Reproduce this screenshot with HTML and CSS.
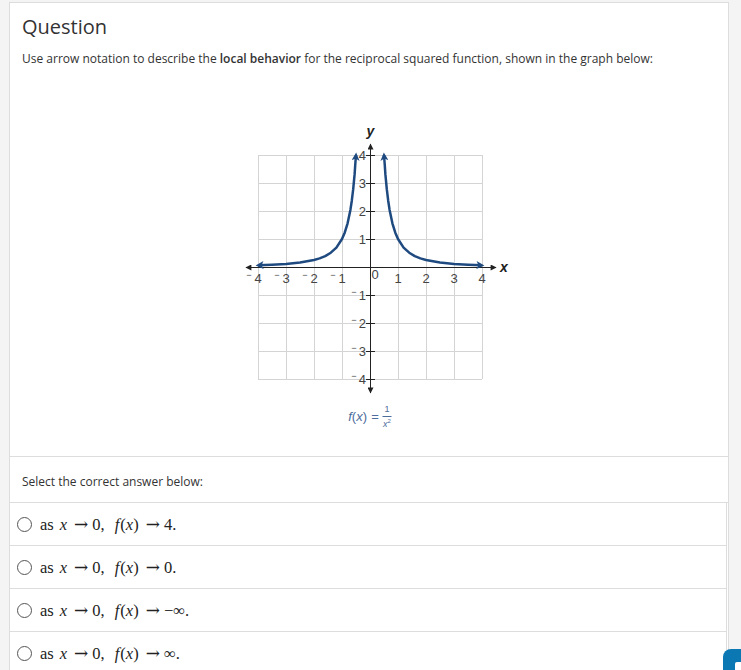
FILE: index.html
```html
<!doctype html>
<html lang="en">
<head>
	<meta charset="UTF-8">
	<title>Question</title>
	<link rel="stylesheet" href="styles.css">
</head>
<body>
	<div class="card">
		<div class="head">
			<h2>Question</h2>
			<p>Use arrow notation to describe the <b>local behavior</b> for the reciprocal squared function, shown in the graph below:</p>
		</div>
		<div class="figure">
			<svg width="300" height="320" viewBox="0 0 300 320">
				<defs>
					<marker id="curveHead" viewBox="0 0 10 10" refX="7" refY="5" markerWidth="10" markerHeight="8" markerUnits="userSpaceOnUse" orient="auto-start-reverse">
						<path d="M0,0 L10,5 L0,10 L2.5,5 z" fill="#1f4a80"/>
					</marker>
					<marker id="axisHead" viewBox="0 0 10 10" refX="9" refY="5" markerWidth="7" markerHeight="6" markerUnits="userSpaceOnUse" orient="auto-start-reverse">
						<path d="M0,0 L10,5 L0,10 z" fill="#222"/>
					</marker>
				</defs>
				<g class="grid">
					<path d="M38.5,35 V259 M66.5,35 V259 M94.5,35 V259 M122.5,35 V259 M178.5,35 V259 M206.5,35 V259 M234.5,35 V259 M262.5,35 V259"/>
					<path d="M38,35.5 H262 M38,63.5 H262 M38,91.5 H262 M38,119.5 H262 M38,175.5 H262 M38,203.5 H262 M38,231.5 H262 M38,259.5 H262"/>
				</g>
				<g class="axis">
					<path d="M26,147.5 H276" marker-start="url(#axisHead)" marker-end="url(#axisHead)"/>
					<path d="M150.5,24 V273" marker-start="url(#axisHead)" marker-end="url(#axisHead)"/>
					<path d="M146,35.5 H155 M146,63.5 H155 M146,91.5 H155 M146,119.5 H155 M146,175.5 H155 M146,203.5 H155 M146,231.5 H155 M146,259.5 H155"/>
				</g>
				<g class="curve">
					<path d="M164,35 L164.7,44 L165.4,54.4 L166.8,69.2 L168.2,80.7 L169.6,89.9 L172.4,103.3 L175.2,112.4 L178,119 L183.6,127.6 L189.2,132.7 L194.8,136.1 L200.4,138.4 L206,140 L220,142.5 L234,143.9 L248,144.7 L262,145.3" marker-start="url(#curveHead)" marker-end="url(#curveHead)"/>
					<path d="M136,35 L135.3,44 L134.6,54.4 L133.2,69.2 L131.8,80.7 L130.4,89.9 L127.6,103.3 L124.8,112.4 L122,119 L116.4,127.6 L110.8,132.7 L105.2,136.1 L99.6,138.4 L94,140 L80,142.5 L66,143.9 L52,144.7 L38,145.3" marker-start="url(#curveHead)" marker-end="url(#curveHead)"/>
				</g>
				<g class="ticks">
					<text x="38" y="163">4</text>
					<text x="66" y="163">3</text>
					<text x="94" y="163">2</text>
					<text x="122" y="163">1</text>
					<text x="178" y="163">1</text>
					<text x="206" y="163">2</text>
					<text x="234" y="163">3</text>
					<text x="262" y="163">4</text>
					<text x="155" y="159">0</text>
				</g>
				<g class="minus">
					<text x="29" y="158">−</text>
					<text x="57" y="158">−</text>
					<text x="85" y="158">−</text>
					<text x="113" y="158">−</text>
					<text x="134" y="175">−</text>
					<text x="134" y="203">−</text>
					<text x="134" y="231">−</text>
					<text x="134" y="259">−</text>
				</g>
				<g class="yticks">
					<text x="146" y="40">4</text>
					<text x="146" y="68">3</text>
					<text x="146" y="96">2</text>
					<text x="146" y="124">1</text>
					<text x="146" y="180">1</text>
					<text x="146" y="208">2</text>
					<text x="146" y="236">3</text>
					<text x="146" y="264">4</text>
				</g>
				<text class="axis-name" x="150.5" y="16">y</text>
				<text class="axis-name" x="284" y="152">x</text>
				<g class="formula">
					<text class="fx" x="147" y="301"><tspan font-style="italic">f</tspan>(<tspan font-style="italic">x</tspan>)</text>
					<text class="eq" x="155" y="301">=</text>
					<text class="frac" x="167" y="292">1</text>
					<path d="M162.5,296.5 H171.5"/>
					<text class="frac" x="167" y="307"><tspan font-style="italic">x</tspan><tspan font-size="6" dy="-4">2</tspan></text>
				</g>
			</svg>
		</div>
		<div class="prompt">Select the correct answer below:</div>
		<ul class="options">
			<li><span class="radio"></span><span class="math"><span class="as">as</span><i>x</i><span class="to">→</span>0,<i class="fn">f</i>(<i>x</i>)<span class="to">→</span>4.</span></li>
			<li><span class="radio"></span><span class="math"><span class="as">as</span><i>x</i><span class="to">→</span>0,<i class="fn">f</i>(<i>x</i>)<span class="to">→</span>0.</span></li>
			<li><span class="radio"></span><span class="math"><span class="as">as</span><i>x</i><span class="to">→</span>0,<i class="fn">f</i>(<i>x</i>)<span class="to">→</span>−∞.</span></li>
			<li><span class="radio"></span><span class="math"><span class="as">as</span><i>x</i><span class="to">→</span>0,<i class="fn">f</i>(<i>x</i>)<span class="to">→</span>∞.</span></li>
		</ul>
	</div>
	<div class="help"><span></span></div>
</body>
</html>
```

FILE: styles.css
```css
html, body {
	margin: 0;
	padding: 0;
}
body {
	background-color: #f4f4f4;
	font-family: "Open Sans", "Liberation Sans", sans-serif;
	color: #333;
}
.card {
	margin: 2px 12px 0 9px;
	border: 1px solid #ddd;
	border-bottom: none;
	background-color: #fff;
}
.head {
	padding: 10px 12px 0;
}
.head h2 {
	margin: 0;
	font-size: 20px;
	line-height: 27px;
	font-weight: 400;
	color: #333;
}
.head p {
	margin: 10px 0 0;
	font-size: 12px;
	line-height: 17px;
}
.head b {
	font-weight: 600;
}
.figure {
	padding: 53px 0 16px;
}
.figure svg {
	display: block;
	margin-left: 210px;
}
.grid path {
	fill: none;
	stroke: #d4d4d4;
	stroke-width: 1;
}
.axis path {
	fill: none;
	stroke: #222;
	stroke-width: 1;
}
.curve path {
	fill: none;
	stroke: #1f4a80;
	stroke-width: 2.5;
	stroke-linejoin: round;
}
.ticks text, .yticks text {
	font-family: "Liberation Sans", Arial, sans-serif;
	font-size: 13px;
	fill: #444;
}
.ticks text {
	text-anchor: middle;
}
.yticks text {
	text-anchor: end;
}
.minus text {
	font-family: "Liberation Sans", Arial, sans-serif;
	font-size: 9px;
	fill: #444;
	text-anchor: middle;
}
.axis-name {
	font-family: "Liberation Sans", Arial, sans-serif;
	font-size: 14px;
	font-weight: bold;
	font-style: italic;
	fill: #222;
	text-anchor: middle;
}
.formula text {
	font-family: "Liberation Sans", Arial, sans-serif;
	fill: #4d6d9c;
}
.formula .fx {
	font-size: 13px;
	text-anchor: end;
}
.formula .eq {
	font-size: 13px;
	text-anchor: middle;
}
.formula .frac {
	font-size: 9px;
	text-anchor: middle;
}
.formula path {
	stroke: #4d6d9c;
	stroke-width: 1;
}
.prompt {
	padding: 16px 12px 12px;
	border-top: 1px solid #ddd;
	border-bottom: 1px solid #ddd;
	font-size: 12px;
	line-height: 17px;
}
.options {
	margin: 0 1px 0 0;
	padding: 0;
	list-style: none;
	border-right: 1px solid #ddd;
}
.options li {
	display: flex;
	align-items: center;
	gap: 8px;
	height: 42px;
	padding-left: 7px;
	border-bottom: 1px solid #ddd;
}
.radio {
	box-sizing: border-box;
	width: 15px;
	height: 15px;
	border: 1.6px solid #555;
	border-radius: 50%;
}
.math {
	font-family: "Liberation Serif", "DejaVu Serif", serif;
	font-size: 16.5px;
	color: #222;
	white-space: nowrap;
}
.math i {
	font-style: italic;
}
.math .as {
	margin-right: 6px;
}
.math .fn {
	margin-left: 10px;
	margin-right: 1px;
}
.math .to {
	margin: 0 4px 0 7px;
	font-family: "DejaVu Serif", serif;
	font-size: 17px;
}
.help {
	position: fixed;
	left: 723px;
	top: 649px;
	width: 40px;
	height: 40px;
	border-radius: 8px;
	background-color: #0b78b4;
}
.help span {
	position: absolute;
	left: 12px;
	top: 13px;
	width: 14px;
	height: 14px;
	border-radius: 2px;
	background-color: #fff;
}
```
